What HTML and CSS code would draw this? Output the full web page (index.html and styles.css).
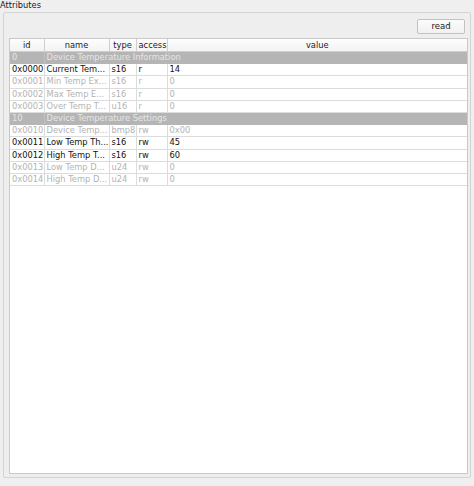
FILE: index.html
```html
<!DOCTYPE html>
<html>
<head>
<meta charset="utf-8">
<link rel="stylesheet" href="styles.css">
</head>
<body>
<div class="title">Attributes</div>
<div class="group">
  <div class="toolbar"><button class="btn">read</button></div>
  <div class="view">
    <table class="grid">
      <colgroup>
        <col class="c-id"><col class="c-name"><col class="c-type"><col class="c-acc"><col>
      </colgroup>
      <thead>
        <tr><th>id</th><th>name</th><th>type</th><th class="left">access</th><th>value</th></tr>
      </thead>
      <tbody>
        <tr class="sect"><td>0</td><td colspan="4">Device Temperature Information</td></tr>
        <tr><td>0x0000</td><td>Current Tem...</td><td>s16</td><td>r</td><td>14</td></tr>
        <tr class="dis"><td>0x0001</td><td>Min Temp Ex...</td><td>s16</td><td>r</td><td>0</td></tr>
        <tr class="dis"><td>0x0002</td><td>Max Temp E...</td><td>s16</td><td>r</td><td>0</td></tr>
        <tr class="dis"><td>0x0003</td><td>Over Temp T...</td><td>u16</td><td>r</td><td>0</td></tr>
        <tr class="sect"><td>10</td><td colspan="4">Device Temperature Settings</td></tr>
        <tr class="dis"><td>0x0010</td><td>Device Temp...</td><td>bmp8</td><td>rw</td><td>0x00</td></tr>
        <tr><td>0x0011</td><td>Low Temp Th...</td><td>s16</td><td>rw</td><td>45</td></tr>
        <tr><td>0x0012</td><td>High Temp T...</td><td>s16</td><td>rw</td><td>60</td></tr>
        <tr class="dis"><td>0x0013</td><td>Low Temp D...</td><td>u24</td><td>rw</td><td>0</td></tr>
        <tr class="dis"><td>0x0014</td><td>High Temp D...</td><td>u24</td><td>rw</td><td>0</td></tr>
      </tbody>
    </table>
  </div>
</div>
</body>
</html>
```

FILE: styles.css
```css
html, body {
  margin: 0;
  padding: 0;
  background: #efefef;
  font-family: "DejaVu Sans", sans-serif;
  font-size: 8.3px;
  color: #1a1a1a;
}
body {
  width: 474px;
  height: 486px;
  overflow: hidden;
}
.title {
  height: 12px;
  line-height: 11px;
}
.group {
  margin-left: 3px;
  width: 468px;
  height: 466px;
  box-sizing: border-box;
  border: 1px solid #d4d4d4;
  border-radius: 2px;
  background: #eeeeee;
  padding: 6px 2px 3px 5px;
  display: flex;
  flex-direction: column;
}
.toolbar {
  display: flex;
  justify-content: flex-end;
  padding-right: 3px;
  margin-bottom: 4px;
}
.btn {
  width: 48px;
  height: 15px;
  box-sizing: border-box;
  border: 1px solid #c2c2c2;
  border-radius: 2px;
  background: linear-gradient(#fbfbfb, #f1f1f1);
  font-family: "DejaVu Sans", sans-serif;
  font-size: 8.5px;
  color: #1a1a1a;
  padding: 0;
  line-height: 13px;
}
.view {
  flex: 1;
  background: #ffffff;
  border: 1px solid #c9c9c9;
  overflow: hidden;
}
.grid {
  width: 100%;
  border-collapse: collapse;
  table-layout: fixed;
}
.c-id { width: 34px; }
.c-name { width: 65px; }
.c-type { width: 27px; }
.c-acc { width: 31px; }
th {
  height: 12px;
  padding: 0;
  font-weight: normal;
  text-align: center;
  background: linear-gradient(#fdfdfd, #f3f3f3);
  border-right: 1px solid #cfcfcf;
  border-bottom: 1px solid #cfcfcf;
  color: #1a1a1a;
  line-height: 11px;
}
th.left { text-align: left; padding-left: 2px; }
th:last-child { border-right: none; }
td {
  height: 11.2px;
  padding: 0 0 0 2px;
  white-space: nowrap;
  overflow: hidden;
  border-right: 1px solid #dcdcdc;
  border-bottom: 1px solid #dcdcdc;
  line-height: 11px;
  color: #111111;
}
td:last-child { border-right: none; }
tr.dis td { color: #b3b3b3; }
tr.sect td {
  background: #b5b5b5;
  color: #e6e6e6;
  border-right: 1px solid #c2c2c2;
  border-bottom-color: #b5b5b5;
}
tr.sect td:last-child { border-right: none; }
```
